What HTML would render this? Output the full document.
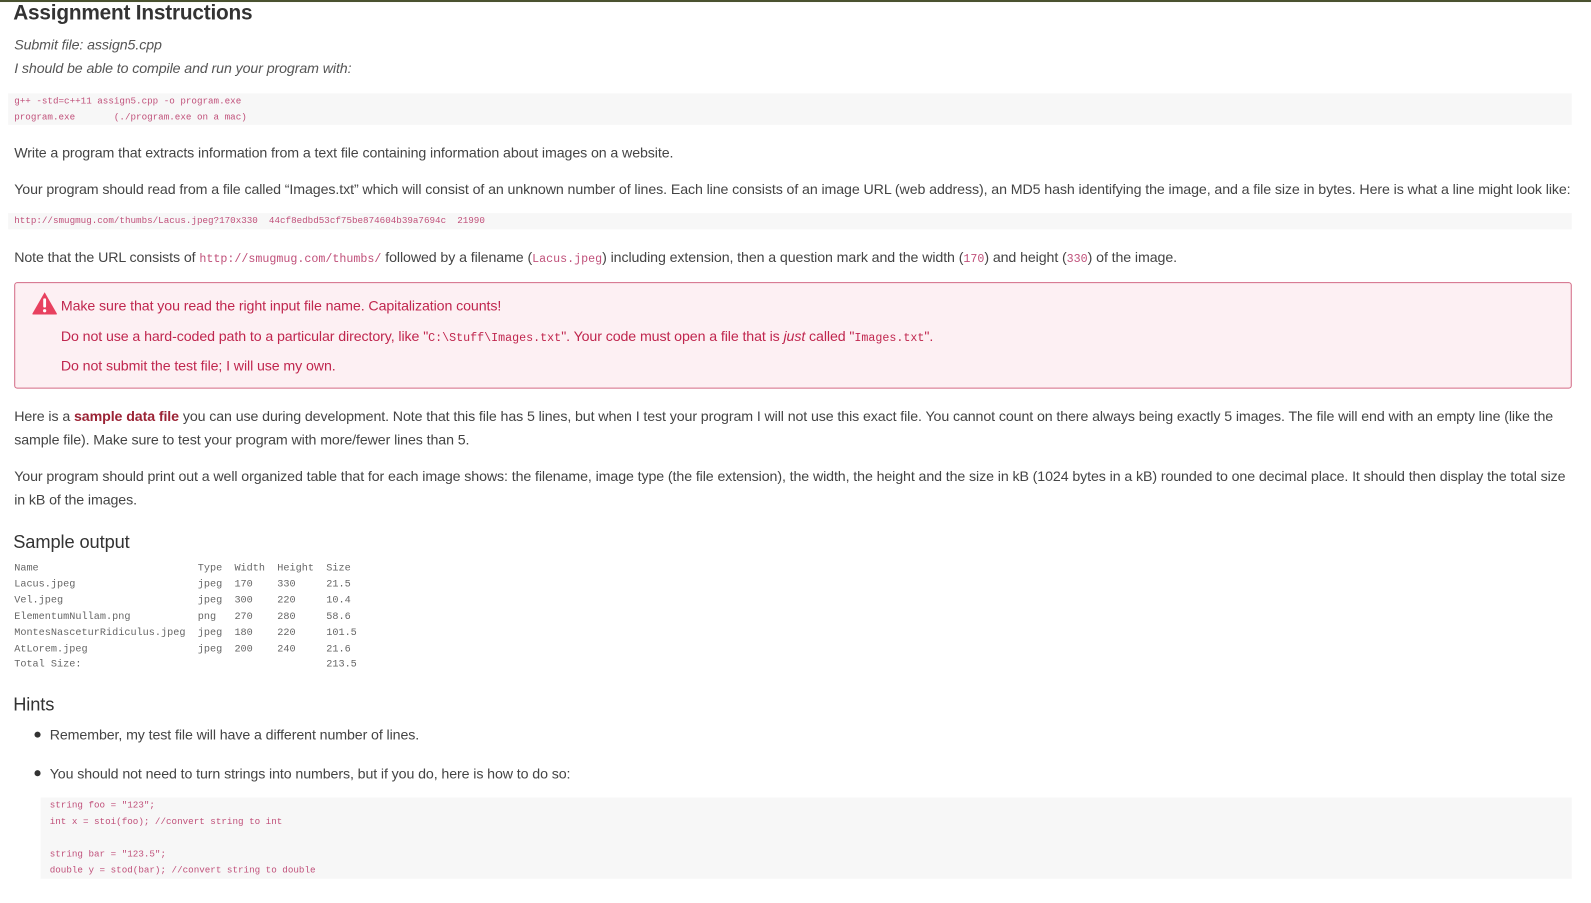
<!DOCTYPE html>
<html><head><meta charset="utf-8"><style>
body{margin:0;width:1591px;height:902px;background:#fff;position:relative;overflow:hidden;font-family:"Liberation Sans",sans-serif;color:#444;}
#w{position:absolute;left:0;top:0;width:1568px;height:890px;transform:scale(1.0147);transform-origin:0 0}
.t{position:absolute;white-space:nowrap;font-size:14px;line-height:16px;letter-spacing:-0.1px}
.c{font-family:"Liberation Mono",monospace;font-size:9.1px;color:#c0507a;letter-spacing:0}
.tab{position:absolute;font-family:"Liberation Mono",monospace;font-size:10.05px;color:#666;white-space:pre;line-height:15.9px;left:14px;top:553px}
.bg{position:absolute;background:#f7f7f7}
.ic{font-family:"Liberation Mono",monospace;font-size:11.5px;color:#c0507a;letter-spacing:0}
.w{color:#c0264e}
.w .ic{color:#c0264e}
</style></head><body><div id="w">
<div style="position:absolute;left:0;top:0;width:1591px;height:2px;background:#4a5230"></div>
<div class="t" style="left:13px;top:1px;font-size:20.5px;line-height:24px;font-weight:bold;color:#333;letter-spacing:-0.2px">Assignment Instructions</div>
<div class="t" style="left:14px;top:36px;font-style:italic;color:#555">Submit file: assign5.cpp</div>
<div class="t" style="left:14px;top:59px;font-style:italic;color:#555">I should be able to compile and run your program with:</div>
<div class="bg" style="left:8px;top:92px;width:1541px;height:31px"></div>
<div class="t c" style="left:14px;top:92px;line-height:16px;white-space:pre">g++ -std=c++11 assign5.cpp -o program.exe
program.exe       (./program.exe on a mac)</div>
<div class="t" style="left:14px;top:142px">Write a program that extracts information from a text file containing information about images on a website.</div>
<div class="t" style="left:14px;top:178px">Your program should read from a file called “Images.txt” which will consist of an unknown number of lines. Each line consists of an image URL (web address), an MD5 hash identifying the image, and a file size in bytes. Here is what a line might look like:</div>
<div class="bg" style="left:8px;top:210px;width:1541px;height:16px"></div>
<div class="t c" style="left:14px;top:210px;white-space:pre">http://smugmug.com/thumbs/Lacus.jpeg?170x330  44cf8edbd53cf75be874604b39a7694c  21990</div>
<div class="t" style="left:14px;top:245px">Note that the URL consists of <span class="ic">http://smugmug.com/thumbs/</span> followed by a filename (<span class="ic">Lacus.jpeg</span>) including extension, then a question mark and the width (<span class="ic">170</span>) and height (<span class="ic">330</span>) of the image.</div>
<div style="position:absolute;left:14px;top:278px;width:1533px;height:103px;border:1px solid #d36a85;border-radius:3px;background:#fdf0f3"></div>
<svg style="position:absolute;left:31px;top:287px" width="26" height="24" viewBox="0 0 26 24"><path d="M13 1 L25 22 Q25.5 23 24 23 L2 23 Q0.5 23 1 22 Z" fill="#e8415f"/><rect x="11.6" y="7" width="2.8" height="9" rx="1" fill="#fff"/><circle cx="13" cy="19.2" r="1.6" fill="#fff"/></svg>
<div class="t w" style="left:60px;top:293px">Make sure that you read the right input file name. Capitalization counts!</div>
<div class="t w" style="left:60px;top:323px">Do not use a hard-coded path to a particular directory, like "<span class="ic">C:\Stuff\Images.txt</span>". Your code must open a file that is <i>just</i> called "<span class="ic">Images.txt</span>".</div>
<div class="t w" style="left:60px;top:352px">Do not submit the test file; I will use my own.</div>
<div class="t" style="left:14px;top:402px">Here is a <b style="color:#9b2335">sample data file</b> you can use during development. Note that this file has 5 lines, but when I test your program I will not use this exact file. You cannot count on there always being exactly 5 images. The file will end with an empty line (like the</div>
<div class="t" style="left:14px;top:425px">sample file). Make sure to test your program with more/fewer lines than 5.</div>
<div class="t" style="left:14px;top:461px">Your program should print out a well organized table that for each image shows: the filename, image type (the file extension), the width, the height and the size in kB (1024 bytes in a kB) rounded to one decimal place. It should then display the total size</div>
<div class="t" style="left:14px;top:484px">in kB of the images.</div>
<div class="t" style="left:13px;top:523px;font-size:18px;line-height:22px;color:#333">Sample output</div>
<div class="tab">Name                          Type  Width  Height  Size
Lacus.jpeg                    jpeg  170    330     21.5
Vel.jpeg                      jpeg  300    220     10.4
ElementumNullam.png           png   270    280     58.6
MontesNasceturRidiculus.jpeg  jpeg  180    220     101.5
AtLorem.jpeg                  jpeg  200    240     21.6
Total Size:                                        213.5</div>
<div class="t" style="left:13px;top:683px;font-size:18px;line-height:22px;color:#333">Hints</div>
<div style="position:absolute;left:34px;top:721px;width:6px;height:6px;border-radius:50%;background:#333"></div>
<div class="t" style="left:49px;top:716px">Remember, my test file will have a different number of lines.</div>
<div style="position:absolute;left:34px;top:759px;width:6px;height:6px;border-radius:50%;background:#333"></div>
<div class="t" style="left:49px;top:754px">You should not need to turn strings into numbers, but if you do, here is how to do so:</div>
<div class="bg" style="left:40px;top:786px;width:1509px;height:80px"></div>
<div class="t c" style="left:49px;top:786px;line-height:15.9px;white-space:pre">string foo = "123";
int x = stoi(foo); //convert string to int

string bar = "123.5";
double y = stod(bar); //convert string to double</div>
</div></body></html>
